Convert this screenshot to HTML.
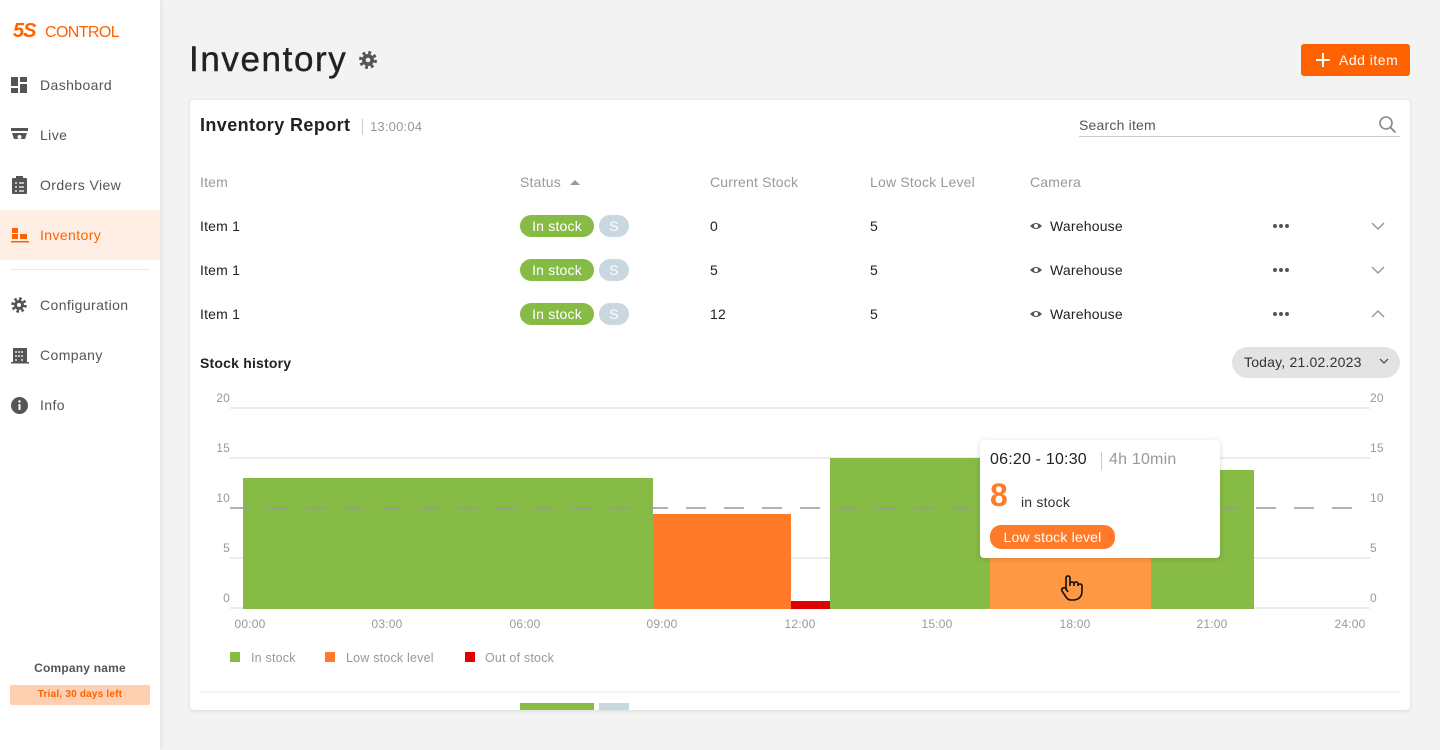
<!DOCTYPE html>
<html><head><meta charset="utf-8"><style>
*{margin:0;padding:0;box-sizing:border-box}
body{width:1440px;height:750px;background:#f3f3f3;font-family:"Liberation Sans",sans-serif;position:relative;overflow:hidden;color:#222;letter-spacing:.2px}
.a{position:absolute;white-space:nowrap}
.side{position:absolute;left:0;top:0;width:160px;height:750px;background:#fff;box-shadow:2px 0 4px rgba(0,0,0,.06)}
.nav{position:absolute;left:0;width:160px;height:50px;font-size:14px;color:#555;display:flex;align-items:center;padding-left:40px;letter-spacing:.4px}
.nav svg{position:absolute;left:11px;top:17px}
.card{position:absolute;left:190px;top:100px;width:1220px;height:610px;background:#fff;border-radius:4px;box-shadow:0 1px 4px rgba(0,0,0,.1);overflow:hidden}
.th{font-size:14px;color:#999;top:174px}
.td{font-size:14px;color:#222}
.pill{position:absolute;height:22px;border-radius:11px;font-size:14px;color:#fff;text-align:center;line-height:22px}
</style></head><body>
<div class="side">
<div class="a" style="left:13px;top:20px;font-size:20px;font-weight:bold;font-style:italic;color:#ff6200;letter-spacing:-1px">5S</div>
<div class="a" style="left:45px;top:24px;font-size:16px;color:#ff6200;letter-spacing:-.6px">CONTROL</div>
<div class="nav" style="top:60px"><svg width="16" height="16"><rect x="0" y="0" width="7" height="9" fill="#555"/><rect x="9" y="0" width="7" height="5" fill="#555"/><rect x="0" y="11" width="7" height="5" fill="#555"/><rect x="9" y="7" width="7" height="9" fill="#555"/></svg>Dashboard</div>
<div class="nav" style="top:110px"><svg width="17" height="16"><rect x="0" y="1" width="17" height="3" fill="#555"/><path d="M1 6h15l-2 6h-11z" fill="#555"/><circle cx="8.5" cy="10" r="2" fill="#fff"/></svg>Live</div>
<div class="nav" style="top:160px"><svg width="16" height="18" style="top:16px;left:12px"><rect x="0" y="2" width="15" height="16" rx="1" fill="#555"/><rect x="4" y="0" width="7" height="4" fill="#555"/><path d="M3 7h2M7 7h5M3 11h2M7 11h5M3 15h2M7 15h5" stroke="#fff" stroke-width="1.2"/></svg>Orders View</div>
<div class="nav" style="top:210px;background:#ffeee4;color:#ff6200"><svg width="18" height="16" style="left:11px"><rect x="1" y="1" width="6" height="5" fill="#ff6200"/><rect x="1" y="7" width="6" height="5" fill="#ff6200"/><rect x="9" y="7" width="7" height="5" fill="#ff6200"/><rect x="0" y="14" width="18" height="1.5" fill="#ff6200"/></svg>Inventory</div>
<div class="a" style="left:10px;top:269px;width:140px;height:1px;background:#e8e8e8"></div>
<div class="nav" style="top:280px"><svg width="16" height="16"><circle cx="8" cy="8" r="6" fill="none" stroke="#555" stroke-width="3.5" stroke-dasharray="2.4 2.3"/><circle cx="8" cy="8" r="5" fill="#555"/><circle cx="8" cy="8" r="2" fill="#fff"/></svg>Configuration</div>
<div class="nav" style="top:330px"><svg width="18" height="18" style="top:16px"><rect x="2" y="2" width="14" height="14" fill="#555"/><path d="M5 5v2M8 5v2M11 5v2M5 9v2M8 9v2M11 9v2M5 13v2M11 13v2" stroke="#fff" stroke-width="1.3"/><rect x="0" y="16" width="18" height="1.5" fill="#555"/></svg>Company</div>
<div class="nav" style="top:380px"><svg width="17" height="17"><circle cx="8.5" cy="8.5" r="8.5" fill="#555"/><rect x="7.5" y="7" width="2" height="6" fill="#fff"/><circle cx="8.5" cy="4.5" r="1.2" fill="#fff"/></svg>Info</div>
<div class="a" style="left:0;width:160px;text-align:center;top:661px;font-size:12px;font-weight:bold;color:#555">Company name</div>
<div class="a" style="left:10px;top:685px;width:140px;height:20px;background:#ffcfb2;border-radius:2px;color:#ff6200;font-size:10px;text-align:center;line-height:20px;font-weight:bold">Trial, 30 days left</div>
</div>

<div class="a" style="left:189px;top:40px;font-size:35px;color:#222;letter-spacing:1.6px;-webkit-text-stroke:.4px #222">Inventory</div>
<svg class="a" style="left:358px;top:50px" width="20" height="20"><circle cx="10" cy="10" r="7" fill="none" stroke="#555" stroke-width="4" stroke-dasharray="2.7 2.8"/><circle cx="10" cy="10" r="6" fill="#555"/><circle cx="10" cy="10" r="2.3" fill="#f3f3f3"/></svg>
<div class="a" style="left:1301px;top:44px;width:109px;height:32px;background:#ff6200;border-radius:3px;color:#fff;font-size:14px;line-height:32px;padding-left:38px;letter-spacing:.5px">Add item</div>
<svg class="a" style="left:1315px;top:52px" width="16" height="16"><path d="M8 1v14M1 8h14" stroke="#fff" stroke-width="2"/></svg>

<div class="card"></div>
<div class="a" style="left:200px;top:115px;font-size:18px;font-weight:bold;letter-spacing:.4px">Inventory Report</div>
<div class="a" style="left:362px;top:119px;width:1px;height:16px;background:#ccc"></div>
<div class="a" style="left:370px;top:119px;font-size:13px;color:#999">13:00:04</div>
<div class="a" style="left:1079px;top:117px;font-size:14px;color:#555">Search item</div>
<div class="a" style="left:1079px;top:136px;width:321px;height:1px;background:#ccc"></div>
<svg class="a" style="left:1378px;top:115px" width="20" height="20"><circle cx="8" cy="8" r="6" fill="none" stroke="#888" stroke-width="1.6"/><path d="M12.5 12.5l5 5" stroke="#888" stroke-width="1.8"/></svg>

<div class="a th" style="left:200px">Item</div>
<div class="a th" style="left:520px">Status</div>
<svg class="a" style="left:570px;top:179px" width="10" height="6"><path d="M0 6l5-5 5 5z" fill="#999"/></svg>
<div class="a th" style="left:710px">Current Stock</div>
<div class="a th" style="left:870px">Low Stock Level</div>
<div class="a th" style="left:1030px">Camera</div>

<div class="a td" style="left:200px;top:218px">Item 1</div><div class="a td" style="left:200px;top:262px">Item 1</div><div class="a td" style="left:200px;top:306px">Item 1</div>
<div class="pill" style="left:520px;top:215px;width:74px;background:#86bb45">In stock</div><div class="pill" style="left:599px;top:215px;width:30px;background:#c9d8e0">S</div>
<div class="pill" style="left:520px;top:259px;width:74px;background:#86bb45">In stock</div><div class="pill" style="left:599px;top:259px;width:30px;background:#c9d8e0">S</div>
<div class="pill" style="left:520px;top:303px;width:74px;background:#86bb45">In stock</div><div class="pill" style="left:599px;top:303px;width:30px;background:#c9d8e0">S</div>
<div class="a td" style="left:710px;top:218px">0</div><div class="a td" style="left:710px;top:262px">5</div><div class="a td" style="left:710px;top:306px">12</div>
<div class="a td" style="left:870px;top:218px">5</div><div class="a td" style="left:870px;top:262px">5</div><div class="a td" style="left:870px;top:306px">5</div>
<div class="a td" style="left:1050px;top:218px">Warehouse</div><div class="a td" style="left:1050px;top:262px">Warehouse</div><div class="a td" style="left:1050px;top:306px">Warehouse</div>
<svg class="a" style="left:1030px;top:0" width="380" height="330">
<g fill="#555"><path d="M0 226q6-6 12 0q-6 6-12 0z"/><path d="M0 270q6-6 12 0q-6 6-12 0z"/><path d="M0 314q6-6 12 0q-6 6-12 0z"/></g>
<g fill="#fff"><circle cx="6" cy="226" r="2"/><circle cx="6" cy="270" r="2"/><circle cx="6" cy="314" r="2"/></g>
<g fill="#555"><circle cx="245" cy="226" r="2"/><circle cx="251" cy="226" r="2"/><circle cx="257" cy="226" r="2"/><circle cx="245" cy="270" r="2"/><circle cx="251" cy="270" r="2"/><circle cx="257" cy="270" r="2"/><circle cx="245" cy="314" r="2"/><circle cx="251" cy="314" r="2"/><circle cx="257" cy="314" r="2"/></g>
<g fill="none" stroke="#999" stroke-width="1.5"><path d="M342 223l6 6 6-6M342 267l6 6 6-6M342 317l6-6 6 6"/></g>
</svg>

<div class="a" style="left:200px;top:355px;font-size:14px;font-weight:bold">Stock history</div>
<div class="a" style="left:1232px;top:347px;width:168px;height:31px;background:#e3e3e3;border-radius:16px;font-size:14px;line-height:31px;padding-left:12px;color:#333">Today, 21.02.2023</div>
<svg class="a" style="left:1379px;top:358px" width="10" height="8"><path d="M1 1l4 4 4-4" stroke="#555" stroke-width="1.4" fill="none"/></svg>

<svg class="a" style="left:0;top:0" width="1440" height="750" font-family="Liberation Sans, sans-serif">
<g stroke="#e6e6e6" stroke-width="1.5"><path d="M230 408H1370M230 458H1370M230 558H1370M230 608H1370"/></g>
<g font-size="12" fill="#999"><text x="230" y="402" text-anchor="end">20</text><text x="230" y="452" text-anchor="end">15</text><text x="230" y="502" text-anchor="end">10</text><text x="230" y="552" text-anchor="end">5</text><text x="230" y="602" text-anchor="end">0</text>
<text x="1370" y="402">20</text><text x="1370" y="452">15</text><text x="1370" y="502">10</text><text x="1370" y="552">5</text><text x="1370" y="602">0</text>
<g text-anchor="middle"><text x="250" y="628">00:00</text><text x="387" y="628">03:00</text><text x="525" y="628">06:00</text><text x="662" y="628">09:00</text><text x="800" y="628">12:00</text><text x="937" y="628">15:00</text><text x="1075" y="628">18:00</text><text x="1212" y="628">21:00</text><text x="1350" y="628">24:00</text></g></g>
<rect x="243" y="478" width="410" height="131" fill="#86bb45"/>
<rect x="653" y="514" width="138" height="95" fill="#ff7a29"/>
<rect x="791" y="601" width="39" height="8" fill="#e10000"/>
<rect x="830" y="458" width="160" height="151" fill="#86bb45"/>
<rect x="990" y="558" width="161" height="51" fill="#ff9843"/>
<rect x="1151" y="470" width="103" height="139" fill="#86bb45"/>
<path d="M230 508H1370" stroke="#999" stroke-width="1.5" stroke-dasharray="20 18"/>
<rect x="230" y="652" width="10" height="10" fill="#86bb45"/><rect x="325" y="652" width="10" height="10" fill="#ff7a29"/><rect x="465" y="652" width="10" height="10" fill="#e10000"/>
<g font-size="12.5" fill="#999"><text x="251" y="662">In stock</text><text x="346" y="662">Low stock level</text><text x="485" y="662">Out of stock</text></g>
<path d="M200 692H1400" stroke="#e8e8e8"/>
<rect x="520" y="703" width="74" height="7" fill="#86bb45"/><rect x="599" y="703" width="30" height="7" fill="#c9d8e0"/>
<path d="M1066 590v-12q0-2 2-2t2 2v8M1070 584q0-2 2-2t2 2v2M1074 584q0-2 2-2t2 2v2M1078 586q0-2 2-2t2 2v5q0 8-8 9h-3q-3 0-5-3l-4-6q-1-2 1-3t3 1l2 3" fill="none" stroke="#111" stroke-width="1.6"/>
</svg>

<div class="a" style="left:980px;top:440px;width:240px;height:118px;background:#fff;border-radius:4px;box-shadow:0 1px 6px rgba(0,0,0,.15)"></div>
<div class="a" style="left:990px;top:451px;font-size:16px;color:#222">06:20 - 10:30</div>
<div class="a" style="left:1101px;top:452px;width:1px;height:18px;background:#ccc"></div>
<div class="a" style="left:1109px;top:451px;font-size:16px;color:#999">4h 10min</div>
<div class="a" style="left:990px;top:477px;font-size:32px;font-weight:bold;color:#ff7a29">8</div>
<div class="a" style="left:1021px;top:494px;font-size:14px;color:#333">in stock</div>
<div class="pill" style="left:990px;top:525px;width:125px;height:24px;line-height:24px;background:#ff7a29">Low stock level</div>
</body></html>
